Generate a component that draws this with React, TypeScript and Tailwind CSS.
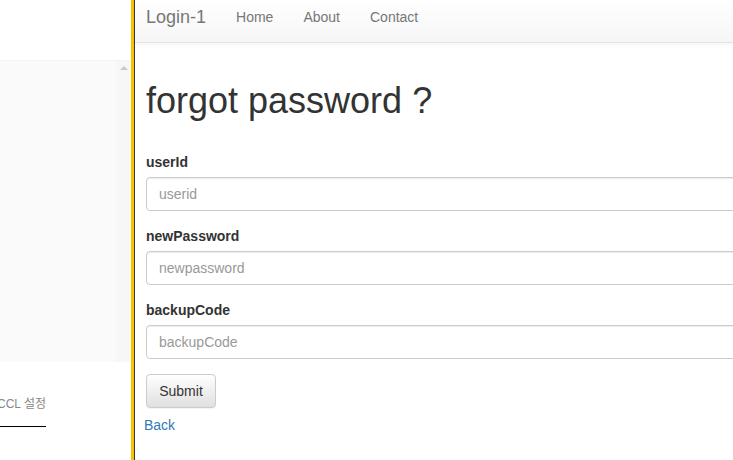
export default function App() {
  const font = { fontFamily: '"Liberation Sans", Arial, sans-serif' };
  return (
    <div className="flex h-[460px] w-[733px] overflow-hidden bg-white text-[14px] text-[#333]" style={font}>
      {/* left panel */}
      <div className="flex w-[131px] shrink-0 flex-col bg-white">
        <div className="h-[61px] border-b border-[#f3f3f3]" />
        <div className="flex h-[301px] bg-[#fafafa]">
          <div className="flex-1" />
          <div className="flex w-[15px] justify-center bg-[#f7f7f7] pt-[5px]">
            <div className="h-0 w-0 border-x-[4px] border-b-[4px] border-x-transparent border-b-[#c8c8c8]" />
          </div>
        </div>
        <div className="mt-[35px] pl-0">
          <div className="ml-[-3px] text-[12px] leading-[15px] text-[#888]" style={{ fontFamily: '"Liberation Sans", "Noto Sans CJK KR", sans-serif' }}>
            CCL 설정
          </div>
          <div className="mt-[14px] h-px w-[46px] bg-black" />
        </div>
      </div>
      <div className="w-[3px] shrink-0 bg-[#f5c400]" />
      <div className="w-px shrink-0 bg-[#3a3a3a]" />
      {/* main */}
      <div className="flex min-w-0 flex-1 flex-col">
        <div className="flex h-[43px] shrink-0 items-center border-b border-[#e3e3e3] bg-gradient-to-b from-white to-[#f6f6f6] pl-[11px] shadow-[0_1px_5px_rgba(0,0,0,0.06)]">
          <span className="text-[18px] leading-[20px] text-[#777] -mt-[8px]">Login-1</span>
          <span className="ml-[30px] -mt-[8px] text-[#777]">Home</span>
          <span className="ml-[30px] -mt-[8px] text-[#777]">About</span>
          <span className="ml-[30px] -mt-[8px] text-[#777]">Contact</span>
        </div>
        <div className="pl-[11px]">
          <h1 className="mt-[38px] text-[36px] leading-[40px] text-[#333]">forgot password ?</h1>
          <div className="mt-[31px]">
            {[
              ["userId", "userid"],
              ["newPassword", "newpassword"],
              ["backupCode", "backupCode"],
            ].map(([label, ph]) => (
              <div key={label} className="mb-[15px]">
                <div className="mb-[5px] font-bold leading-[20px]">{label}</div>
                <div className="flex h-[34px] w-[700px] items-center rounded-[4px] border border-[#ccc] pl-[12px] text-[#999] shadow-[inset_0_1px_1px_rgba(0,0,0,0.075)]">
                  {ph}
                </div>
              </div>
            ))}
          </div>
          <button className="h-[34px] w-[70px] rounded-[4px] border border-[#ccc] bg-gradient-to-b from-white to-[#e0e0e0] text-[14px] text-[#333] shadow-[0_1px_1px_rgba(0,0,0,0.05)]">
            Submit
          </button>
          <div className="ml-[-2px] mt-[7px] leading-[20px] text-[#337ab7]">Back</div>
        </div>
      </div>
    </div>
  );
}
